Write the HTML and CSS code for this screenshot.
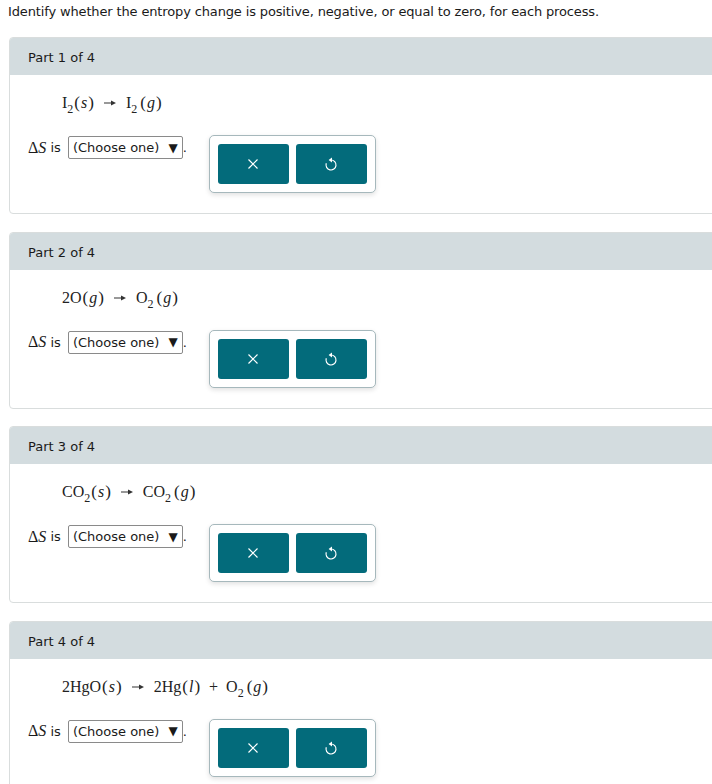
FILE: index.html
```html
<!DOCTYPE html>
<html>
<head>
<meta charset="utf-8">
<link rel="stylesheet" href="styles.css">
</head>
<body>
<p class="intro">Identify whether the entropy change is positive, negative, or equal to zero, for each process.</p>

<section class="card">
  <div class="card-head">Part 1 of 4</div>
  <div class="card-body">
    <div class="eq">I<sub>2</sub><span class="par">(</span><i>s</i><span class="par">)</span><svg class="arrow" viewBox="0 0 12 6" width="12" height="6"><path d="M0 3 H8" stroke="#333" stroke-width="1.2"/><path d="M7 0.6 L12 3 L7 5.4 Z" fill="#333"/></svg>I<sub>2</sub><span class="par sp">(</span><i>g</i><span class="par">)</span></div>
    <div class="row">
      <div class="answer"><span class="ds">&Delta;<i>S</i></span> is <span class="select">(Choose one)<span class="tri">&#9660;</span></span>.</div>
      <div class="tools">
        <button class="btn"><svg viewBox="0 0 12 12" width="12" height="12"><path d="M1.5 1.5 L10.5 10.5 M10.5 1.5 L1.5 10.5" stroke="#fff" stroke-width="1.2" fill="none"/></svg></button>
        <button class="btn"><svg viewBox="0 0 14 16" width="14" height="16"><path d="M7 4 A5 5 0 1 1 2.3 7.3" stroke="#fff" stroke-width="1.2" fill="none"/><path d="M8 1.6 L8 6.4 L4.6 4 Z" fill="#fff"/></svg></button>
      </div>
    </div>
  </div>
</section>

<section class="card">
  <div class="card-head">Part 2 of 4</div>
  <div class="card-body">
    <div class="eq">2O<span class="par">(</span><i>g</i><span class="par">)</span><svg class="arrow" viewBox="0 0 12 6" width="12" height="6"><path d="M0 3 H8" stroke="#333" stroke-width="1.2"/><path d="M7 0.6 L12 3 L7 5.4 Z" fill="#333"/></svg>O<sub>2</sub><span class="par sp">(</span><i>g</i><span class="par">)</span></div>
    <div class="row">
      <div class="answer"><span class="ds">&Delta;<i>S</i></span> is <span class="select">(Choose one)<span class="tri">&#9660;</span></span>.</div>
      <div class="tools">
        <button class="btn"><svg viewBox="0 0 12 12" width="12" height="12"><path d="M1.5 1.5 L10.5 10.5 M10.5 1.5 L1.5 10.5" stroke="#fff" stroke-width="1.2" fill="none"/></svg></button>
        <button class="btn"><svg viewBox="0 0 14 16" width="14" height="16"><path d="M7 4 A5 5 0 1 1 2.3 7.3" stroke="#fff" stroke-width="1.2" fill="none"/><path d="M8 1.6 L8 6.4 L4.6 4 Z" fill="#fff"/></svg></button>
      </div>
    </div>
  </div>
</section>

<section class="card">
  <div class="card-head">Part 3 of 4</div>
  <div class="card-body">
    <div class="eq">CO<sub>2</sub><span class="par">(</span><i>s</i><span class="par">)</span><svg class="arrow" viewBox="0 0 12 6" width="12" height="6"><path d="M0 3 H8" stroke="#333" stroke-width="1.2"/><path d="M7 0.6 L12 3 L7 5.4 Z" fill="#333"/></svg>CO<sub>2</sub><span class="par sp">(</span><i>g</i><span class="par">)</span></div>
    <div class="row">
      <div class="answer"><span class="ds">&Delta;<i>S</i></span> is <span class="select">(Choose one)<span class="tri">&#9660;</span></span>.</div>
      <div class="tools">
        <button class="btn"><svg viewBox="0 0 12 12" width="12" height="12"><path d="M1.5 1.5 L10.5 10.5 M10.5 1.5 L1.5 10.5" stroke="#fff" stroke-width="1.2" fill="none"/></svg></button>
        <button class="btn"><svg viewBox="0 0 14 16" width="14" height="16"><path d="M7 4 A5 5 0 1 1 2.3 7.3" stroke="#fff" stroke-width="1.2" fill="none"/><path d="M8 1.6 L8 6.4 L4.6 4 Z" fill="#fff"/></svg></button>
      </div>
    </div>
  </div>
</section>

<section class="card">
  <div class="card-head">Part 4 of 4</div>
  <div class="card-body">
    <div class="eq">2HgO<span class="par">(</span><i>s</i><span class="par">)</span><svg class="arrow" viewBox="0 0 12 6" width="12" height="6"><path d="M0 3 H8" stroke="#333" stroke-width="1.2"/><path d="M7 0.6 L12 3 L7 5.4 Z" fill="#333"/></svg>2Hg<span class="par">(</span><i>l</i><span class="par">)</span><span class="plus">+</span>O<sub>2</sub><span class="par sp">(</span><i>g</i><span class="par">)</span></div>
    <div class="row">
      <div class="answer"><span class="ds">&Delta;<i>S</i></span> is <span class="select">(Choose one)<span class="tri">&#9660;</span></span>.</div>
      <div class="tools">
        <button class="btn"><svg viewBox="0 0 12 12" width="12" height="12"><path d="M1.5 1.5 L10.5 10.5 M10.5 1.5 L1.5 10.5" stroke="#fff" stroke-width="1.2" fill="none"/></svg></button>
        <button class="btn"><svg viewBox="0 0 14 16" width="14" height="16"><path d="M7 4 A5 5 0 1 1 2.3 7.3" stroke="#fff" stroke-width="1.2" fill="none"/><path d="M8 1.6 L8 6.4 L4.6 4 Z" fill="#fff"/></svg></button>
      </div>
    </div>
  </div>
</section>
</body>
</html>
```

FILE: styles.css
```css
html {
  overflow: hidden;
}
body {
  margin: 0;
  padding: 4px 0 0 8px;
  font-family: "DejaVu Sans", Verdana, sans-serif;
  font-size: 13px;
  color: #1a1a1a;
  background: #fff;
}
.intro {
  margin: 0 0 17px 0;
  line-height: 16px;
  white-space: nowrap;
  letter-spacing: -0.14px;
}
.card {
  margin: 0 0 17.5px 1px;
  width: 730px;
  border: 1px solid #d9dddd;
  border-radius: 4px;
  overflow: hidden;
}
.card-head {
  height: 37px;
  line-height: 39px;
  background: #d3dcdf;
  padding-left: 18px;
  color: #1a1a1a;
}
.card-body {
  padding: 18px 0 20px 18px;
}
.eq {
  font-family: "Liberation Serif", "Times New Roman", serif;
  font-size: 16px;
  line-height: 20px;
  height: 20px;
  padding-left: 34px;
  color: #222;
}
.eq sub {
  font-size: 12px;
  vertical-align: -5px;
  line-height: 0;
}
.eq .par {
  font-size: 17px;
  margin: 0 1px;
}
.eq .sp {
  margin-left: 3px;
}
.eq .arrow {
  margin: 0 10px 0 9px;
  vertical-align: 2px;
}
.eq .plus {
  margin: 0 8px;
}
.row {
  display: flex;
  align-items: flex-start;
  margin-top: 22px;
}
.answer {
  margin-top: 1px;
  display: flex;
  align-items: center;
  height: 23px;
  white-space: pre;
}
.ds {
  font-family: "Liberation Serif", "Times New Roman", serif;
  font-size: 16px;
}
.select {
  display: inline-flex;
  align-items: center;
  height: 21px;
  margin-left: 3px;
  padding: 0 4px 0 4px;
  border: 1px solid #8a8a8a;
  border-radius: 2px;
  color: #1a1a1a;
}
.tri {
  font-size: 12px;
  margin-left: 9px;
}
.tools {
  margin-left: 22px;
  display: flex;
  gap: 7px;
  padding: 8px;
  border: 1px solid #a6b8bc;
  border-radius: 5px;
  box-shadow: 0 2px 5px rgba(0, 0, 0, 0.12);
  background: #fff;
}
.btn {
  width: 71px;
  height: 40px;
  border: 0;
  border-radius: 3px;
  background: #036b7b;
  display: flex;
  align-items: center;
  justify-content: center;
  padding: 0;
}
```
